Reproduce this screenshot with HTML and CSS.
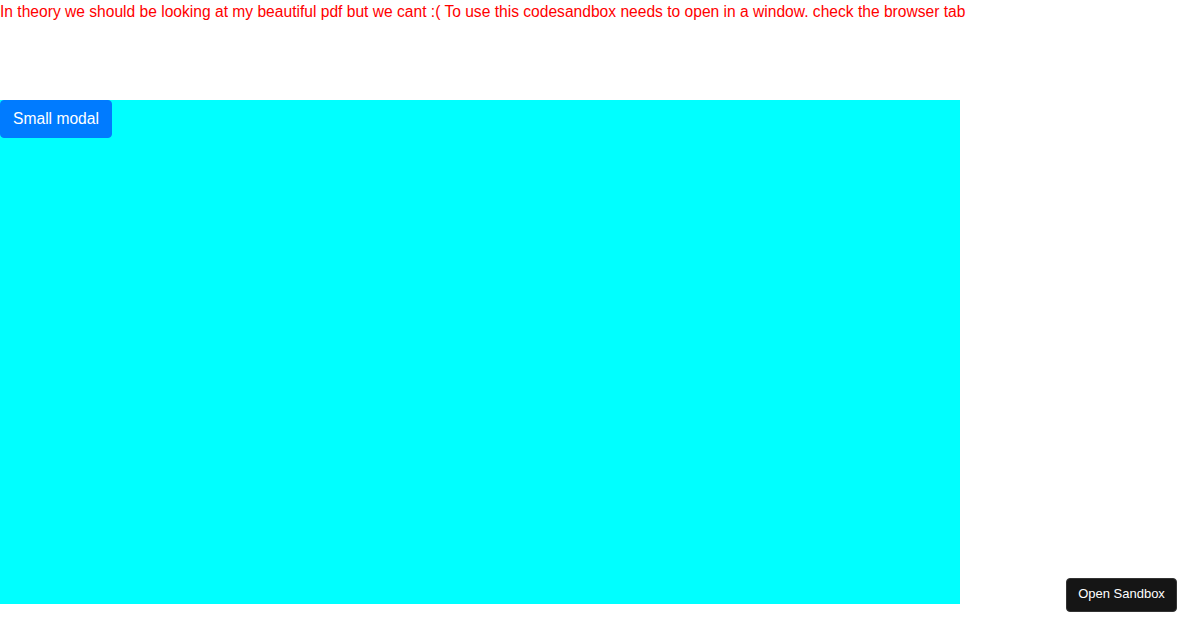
FILE: index.html
```html
<!DOCTYPE html>
<html>
<head>
<meta charset="utf-8">
<link rel="stylesheet" href="styles.css">
</head>
<body>
<div class="notice">In theory we should be looking at my beautiful pdf but we cant :( To use this codesandbox needs to open in a window. check the browser tab</div>
<div class="viewer">
  <button class="btn-primary">Small modal</button>
</div>
<button class="open-sandbox">Open Sandbox</button>
</body>
</html>
```

FILE: styles.css
```css
html, body {
  margin: 0;
  padding: 0;
  background: #fff;
  font-family: "Liberation Sans", Arial, sans-serif;
}
.notice {
  color: #ff0000;
  font-size: 15.6px;
  line-height: 24px;
  height: 100px;
  white-space: nowrap;
}
.viewer {
  width: 960px;
  height: 504px;
  background: #00ffff;
}
.btn-primary {
  display: block;
  box-sizing: border-box;
  margin: 0;
  background: #007bff;
  color: #fff;
  border: 1px solid #007bff;
  border-radius: 4px;
  font-family: "Liberation Sans", Arial, sans-serif;
  font-size: 15.6px;
  line-height: 24px;
  padding: 6px 0;
  width: 112px;
  height: 38px;
  white-space: nowrap;
  text-align: center;
}
.open-sandbox {
  position: fixed;
  left: 1066px;
  top: 578px;
  box-sizing: border-box;
  width: 111px;
  height: 34px;
  background: #151515;
  color: #fff;
  border: 1px solid #333;
  border-radius: 4px;
  font-family: "Liberation Sans", Arial, sans-serif;
  font-size: 13px;
  line-height: 16px;
  padding: 0 0 3px 0;
  white-space: nowrap;
}
```
